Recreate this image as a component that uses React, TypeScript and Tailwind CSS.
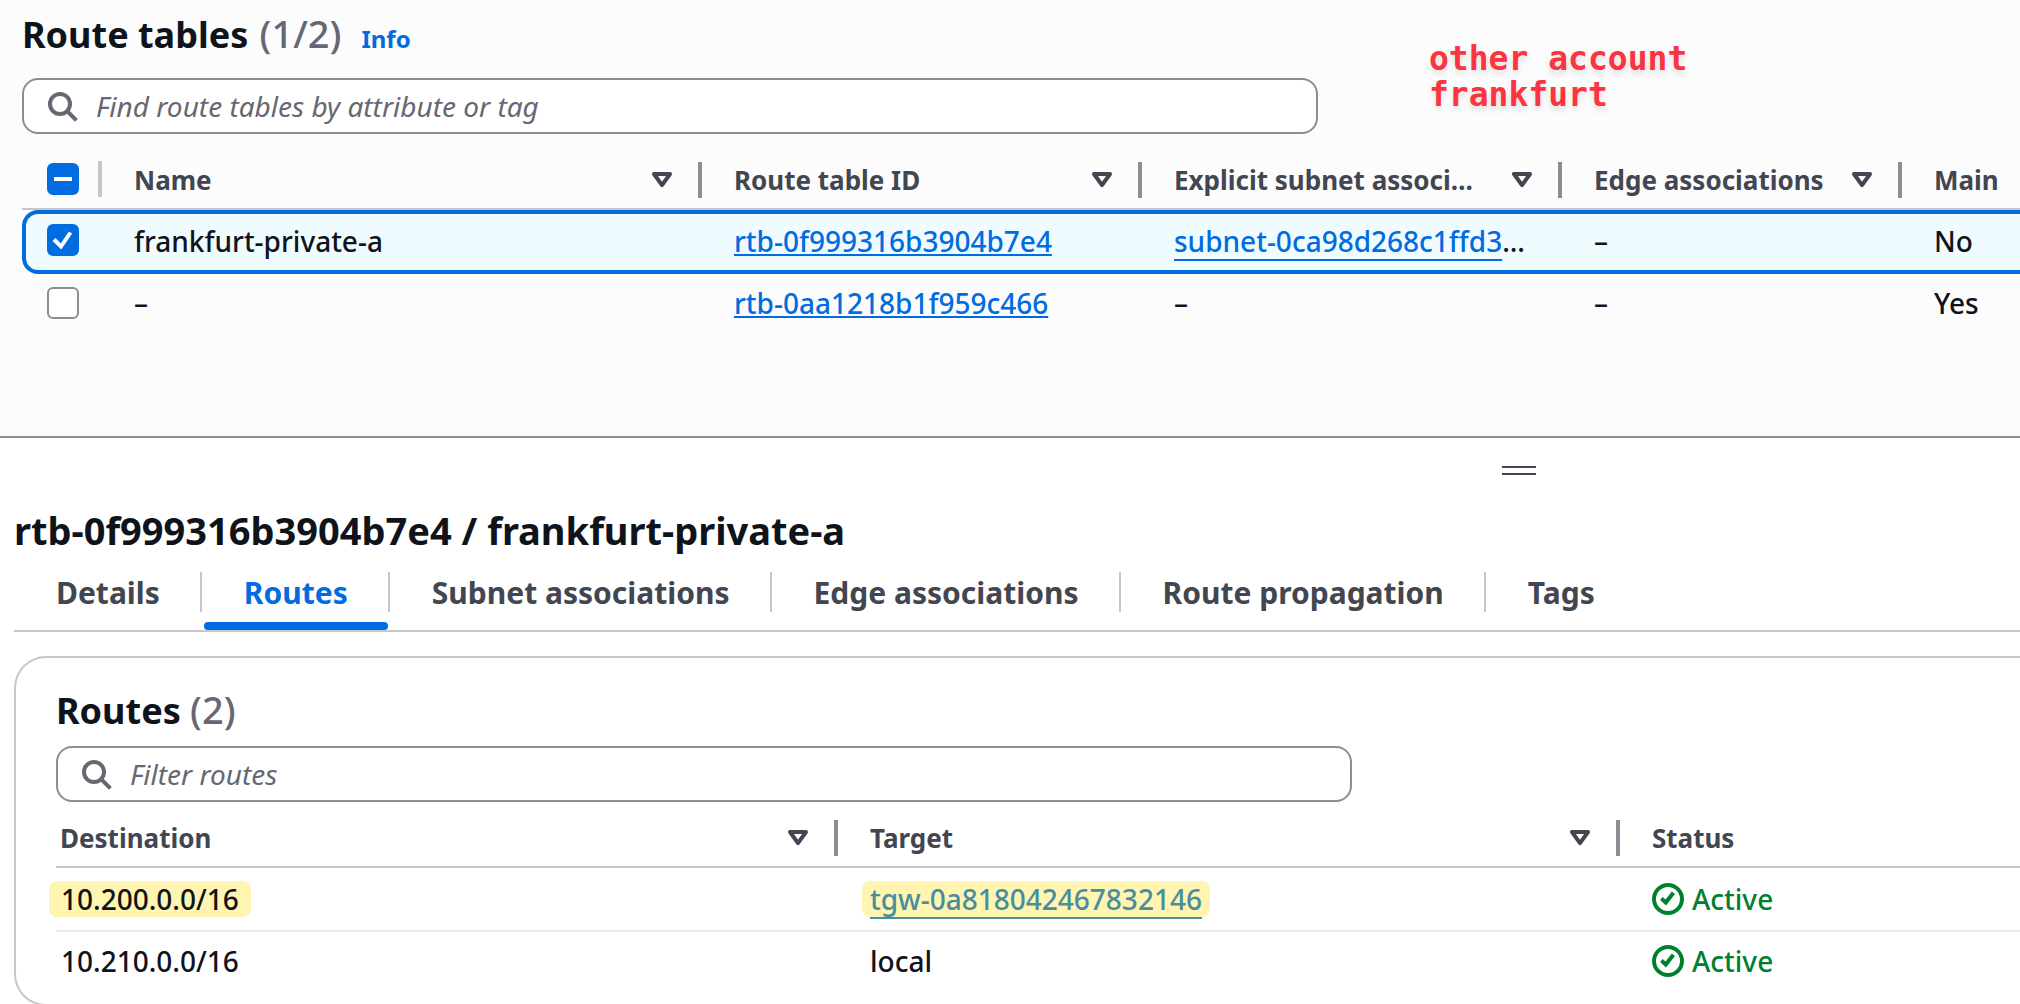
import React, { useState } from "react";

function SearchIcon() {
  return (
    <svg viewBox="0 0 16 16" className="size-8 shrink-0" fill="none" stroke="#656871" strokeWidth="2" aria-hidden="true">
      <circle cx="7" cy="7" r="5" />
      <path d="m10.5 10.5 4.7 4.7" />
    </svg>
  );
}

function SortIcon() {
  return (
    <svg viewBox="0 0 16 16" className="block size-8" fill="none" stroke="#424650" strokeWidth="2" strokeLinejoin="round" aria-hidden="true">
      <path d="M4 5h8l-4 5.6L4 5Z" />
    </svg>
  );
}

function StatusIcon() {
  return (
    <svg viewBox="0 0 16 16" className="size-8 shrink-0" fill="none" stroke="#00802f" strokeWidth="2" aria-hidden="true">
      <circle cx="8" cy="8" r="7" />
      <path d="m4.7 7.8 2.2 2 3.8-4.9" />
    </svg>
  );
}

function SearchBox({ label }: { label: string }) {
  return (
    <label className="flex h-14 w-[1296px] max-w-full items-center gap-[18px] rounded-2xl border-2 border-[#8c8c94] bg-white pl-[22px]">
      <SearchIcon />
      <input
        type="search"
        aria-label={label}
        placeholder={label}
        className="min-w-0 flex-1 bg-transparent text-[28px] leading-10 font-normal outline-none placeholder:text-[#656871] placeholder:italic"
      />
    </label>
  );
}

function Checkbox({ label, state, onChange }: { label: string; state: "on" | "off" | "mixed"; onChange: () => void }) {
  return (
    <span className="grid size-8">
      <input
        type="checkbox"
        aria-label={label}
        checked={state !== "off"}
        onChange={onChange}
        className="col-start-1 row-start-1 size-8 appearance-none rounded-md border-2 border-[#8c8c94] bg-white checked:border-[#006ce0] checked:bg-[#006ce0]"
      />
      {state !== "off" && (
        <svg viewBox="0 0 32 32" className="pointer-events-none col-start-1 row-start-1 size-8" fill="none" stroke="#fff" strokeWidth="4" aria-hidden="true">
          <path d={state === "on" ? "m7 15.5 7 7 9.5-14" : "M7 16h18"} />
        </svg>
      )}
    </span>
  );
}

function HeaderCell({ label, pad = "pl-8", sortable = true }: { label: string; pad?: string; sortable?: boolean }) {
  return (
    <th scope="col" className="h-[60px] border-b-2 border-[#c6c6cd] p-0 pt-0.5 text-left text-[26px] font-bold text-[#424650]">
      <div className={`flex items-center ${pad}`}>
        <span className="flex-1 whitespace-nowrap">{label}</span>
        {sortable && (
          <>
            <button type="button" aria-label={`Sort by ${label}`} className="mr-5">
              <SortIcon />
            </button>
            <span className="h-9 w-1 bg-[#8c8c94]" />
          </>
        )}
      </div>
    </th>
  );
}

const routeTables = [
  { name: "frankfurt-private-a", id: "rtb-0f999316b3904b7e4", subnet: "subnet-0ca98d268c1ffd3", edge: "–", main: "No" },
  { name: "–", id: "rtb-0aa1218b1f959c466", subnet: "", edge: "–", main: "Yes" },
];

const tabs = ["Details", "Routes", "Subnet associations", "Edge associations", "Route propagation", "Tags"];

function RouteTables() {
  const [selected, setSelected] = useState([true, false]);
  const toggle = (i: number) => setSelected(selected.map((s, j) => (j === i ? !s : s)));
  const count = selected.filter(Boolean).length;
  const all = count === 0 ? "off" : count === selected.length ? "on" : "mixed";

  return (
    <section className="relative bg-[#fcfcfd] pt-[11px] pb-[104px] pl-[22px]">
      <div className="flex h-12 items-baseline">
        <h1 className="text-[36px] leading-[48px] font-bold">
          Route tables <span className="ml-0.5 text-[38px] leading-none font-medium text-[#656871]">({count}/2)</span>
        </h1>
        <a href="#info" className="ml-5 text-2xl font-bold text-[#006ce0]">
          Info
        </a>
      </div>
      <div className="mt-[19px]">
        <SearchBox label="Find route tables by attribute or tag" />
      </div>

      <table className="mt-4 w-full table-fixed border-separate border-spacing-0">
        <colgroup>
          <col className="w-[80px]" />
          <col className="w-[600px]" />
          <col className="w-[440px]" />
          <col className="w-[420px]" />
          <col className="w-[340px]" />
          <col />
        </colgroup>
        <thead>
          <tr>
            <th scope="col" className="border-b-2 border-[#c6c6cd] p-0">
              <div className="flex items-center justify-between pl-[25px]">
                <Checkbox label="Select all" state={all} onChange={() => setSelected(selected.map(() => all !== "on"))} />
                <span className="h-9 w-1 bg-[#c6c6cd]" />
              </div>
            </th>
            <HeaderCell label="Name" />
            <HeaderCell label="Route table ID" />
            <HeaderCell label="Explicit subnet associ…" />
            <HeaderCell label="Edge associations" />
            <HeaderCell label="Main" sortable={false} />
          </tr>
        </thead>
        <tbody>
          {routeTables.map((row, i) => {
            const on = selected[i];
            const cell = on
              ? "h-16 border-y-4 border-[#006ce0] bg-[#f0fbff] p-0 pb-0.5 pl-8"
              : "h-[58px] p-0 pl-8";
            return (
              <tr key={row.id}>
                <td className={on ? "rounded-l-2xl border-y-4 border-l-4 border-[#006ce0] bg-[#f0fbff] p-0 pb-1 pl-[21px]" : "p-0 pl-[25px]"}>
                  <Checkbox label={`Select ${row.id}`} state={on ? "on" : "off"} onChange={() => toggle(i)} />
                </td>
                <td className={cell}>{row.name}</td>
                <td className={cell}>
                  <a href={`#${row.id}`} className="text-[#006ce0] underline decoration-2 underline-offset-2">
                    {row.id}
                  </a>
                </td>
                <td className={cell}>
                  {row.subnet ? (
                    <>
                      <a href={`#${row.subnet}`} className="text-[#006ce0] underline decoration-2 underline-offset-[7px]">
                        {row.subnet}
                      </a>
                      …
                    </>
                  ) : (
                    "–"
                  )}
                </td>
                <td className={cell}>{row.edge}</td>
                <td className={cell}>{row.main}</td>
              </tr>
            );
          })}
        </tbody>
      </table>

      <p className="absolute top-[41px] left-[1429px] font-['DejaVu_Sans_Mono',monospace] text-[33px] leading-9 font-bold text-[#fb3442] text-shadow-[0_4px_6px_rgb(0_0_0/0.12)]">
        other account
        <br />
        frankfurt
      </p>
    </section>
  );
}

function Details() {
  const [tab, setTab] = useState("Routes");

  return (
    <section className="border-t-2 border-[#8c8c94] bg-white pl-[14px]">
      <div role="separator" aria-label="Resize panel" className="mt-7 ml-[1488px] h-[9px] w-[34px] border-y-2 border-[#424650]" />
      <h2 className="mt-[31px] text-[38px] leading-[48px] font-bold">rtb-0f999316b3904b7e4 / frankfurt-private-a</h2>

      <div role="tablist" className="mt-[18px] flex border-b-2 border-[#c6c6cd] text-[30px] leading-[42px] font-bold">
        {tabs.map((name, i) => {
          const active = name === tab;
          return (
            <div key={name} className="flex">
              {i > 0 && <span className="h-10 w-0.5 bg-[#c6c6cd]" />}
              <button
                type="button"
                role="tab"
                aria-selected={active}
                onClick={() => setTab(name)}
                className={active ? "text-[#006ce0]" : "text-[#424650]"}
              >
                <span className="block pr-10 pl-[42px]">{name}</span>
                <span className={active ? "mt-2 ml-0.5 block h-2 rounded bg-[#006ce0]" : "mt-2 block h-2"} />
              </button>
            </div>
          );
        })}
      </div>

      <div className="mt-6 rounded-l-[32px] border-2 border-r-0 border-[#c6c6cd] pt-[29px] pb-3.5 pl-10">
        <h3 className="h-12 text-[36px] leading-[48px] font-bold">
          Routes <span className="text-[38px] leading-none font-medium text-[#656871]">(2)</span>
        </h3>
        <div className="mt-[11px]">
          <SearchBox label="Filter routes" />
        </div>
        <table className="mt-1.5 w-full table-fixed border-separate border-spacing-0">
          <colgroup>
            <col className="w-[782px]" />
            <col className="w-[782px]" />
            <col />
          </colgroup>
          <thead>
            <tr>
              <HeaderCell label="Destination" pad="pl-1" />
              <HeaderCell label="Target" />
              <HeaderCell label="Status" sortable={false} />
            </tr>
          </thead>
          <tbody>
            <tr>
              <td className="h-16 border-b-2 border-[#ebebf0] p-0">
                <mark className="-ml-[7px] inline-block rounded-lg bg-[#fff4b0] px-3 leading-9 text-inherit">10.200.0.0/16</mark>
              </td>
              <td className="border-b-2 border-[#ebebf0] p-0 pl-8">
                <mark className="-ml-2 inline-block rounded-lg bg-[#fff4b0] px-2 leading-9">
                  <a href="#tgw" className="text-[#478ea0] underline decoration-2 underline-offset-[7px]">
                    tgw-0a818042467832146
                  </a>
                </mark>
              </td>
              <td className="border-b-2 border-[#ebebf0] p-0 pl-8">
                <span className="flex items-center gap-2 text-[#00802f]">
                  <StatusIcon />
                  Active
                </span>
              </td>
            </tr>
            <tr>
              <td className="h-[58px] p-0 pl-[5px]">10.210.0.0/16</td>
              <td className="p-0 pl-8">local</td>
              <td className="p-0 pl-8">
                <span className="flex items-center gap-2 text-[#00802f]">
                  <StatusIcon />
                  Active
                </span>
              </td>
            </tr>
          </tbody>
        </table>
      </div>
    </section>
  );
}

export default function App() {
  return (
    <main className="min-h-screen overflow-hidden bg-white font-['Noto_Sans',sans-serif] text-[28px] leading-10 font-medium text-[#0f141a]">
      <RouteTables />
      <Details />
    </main>
  );
}
